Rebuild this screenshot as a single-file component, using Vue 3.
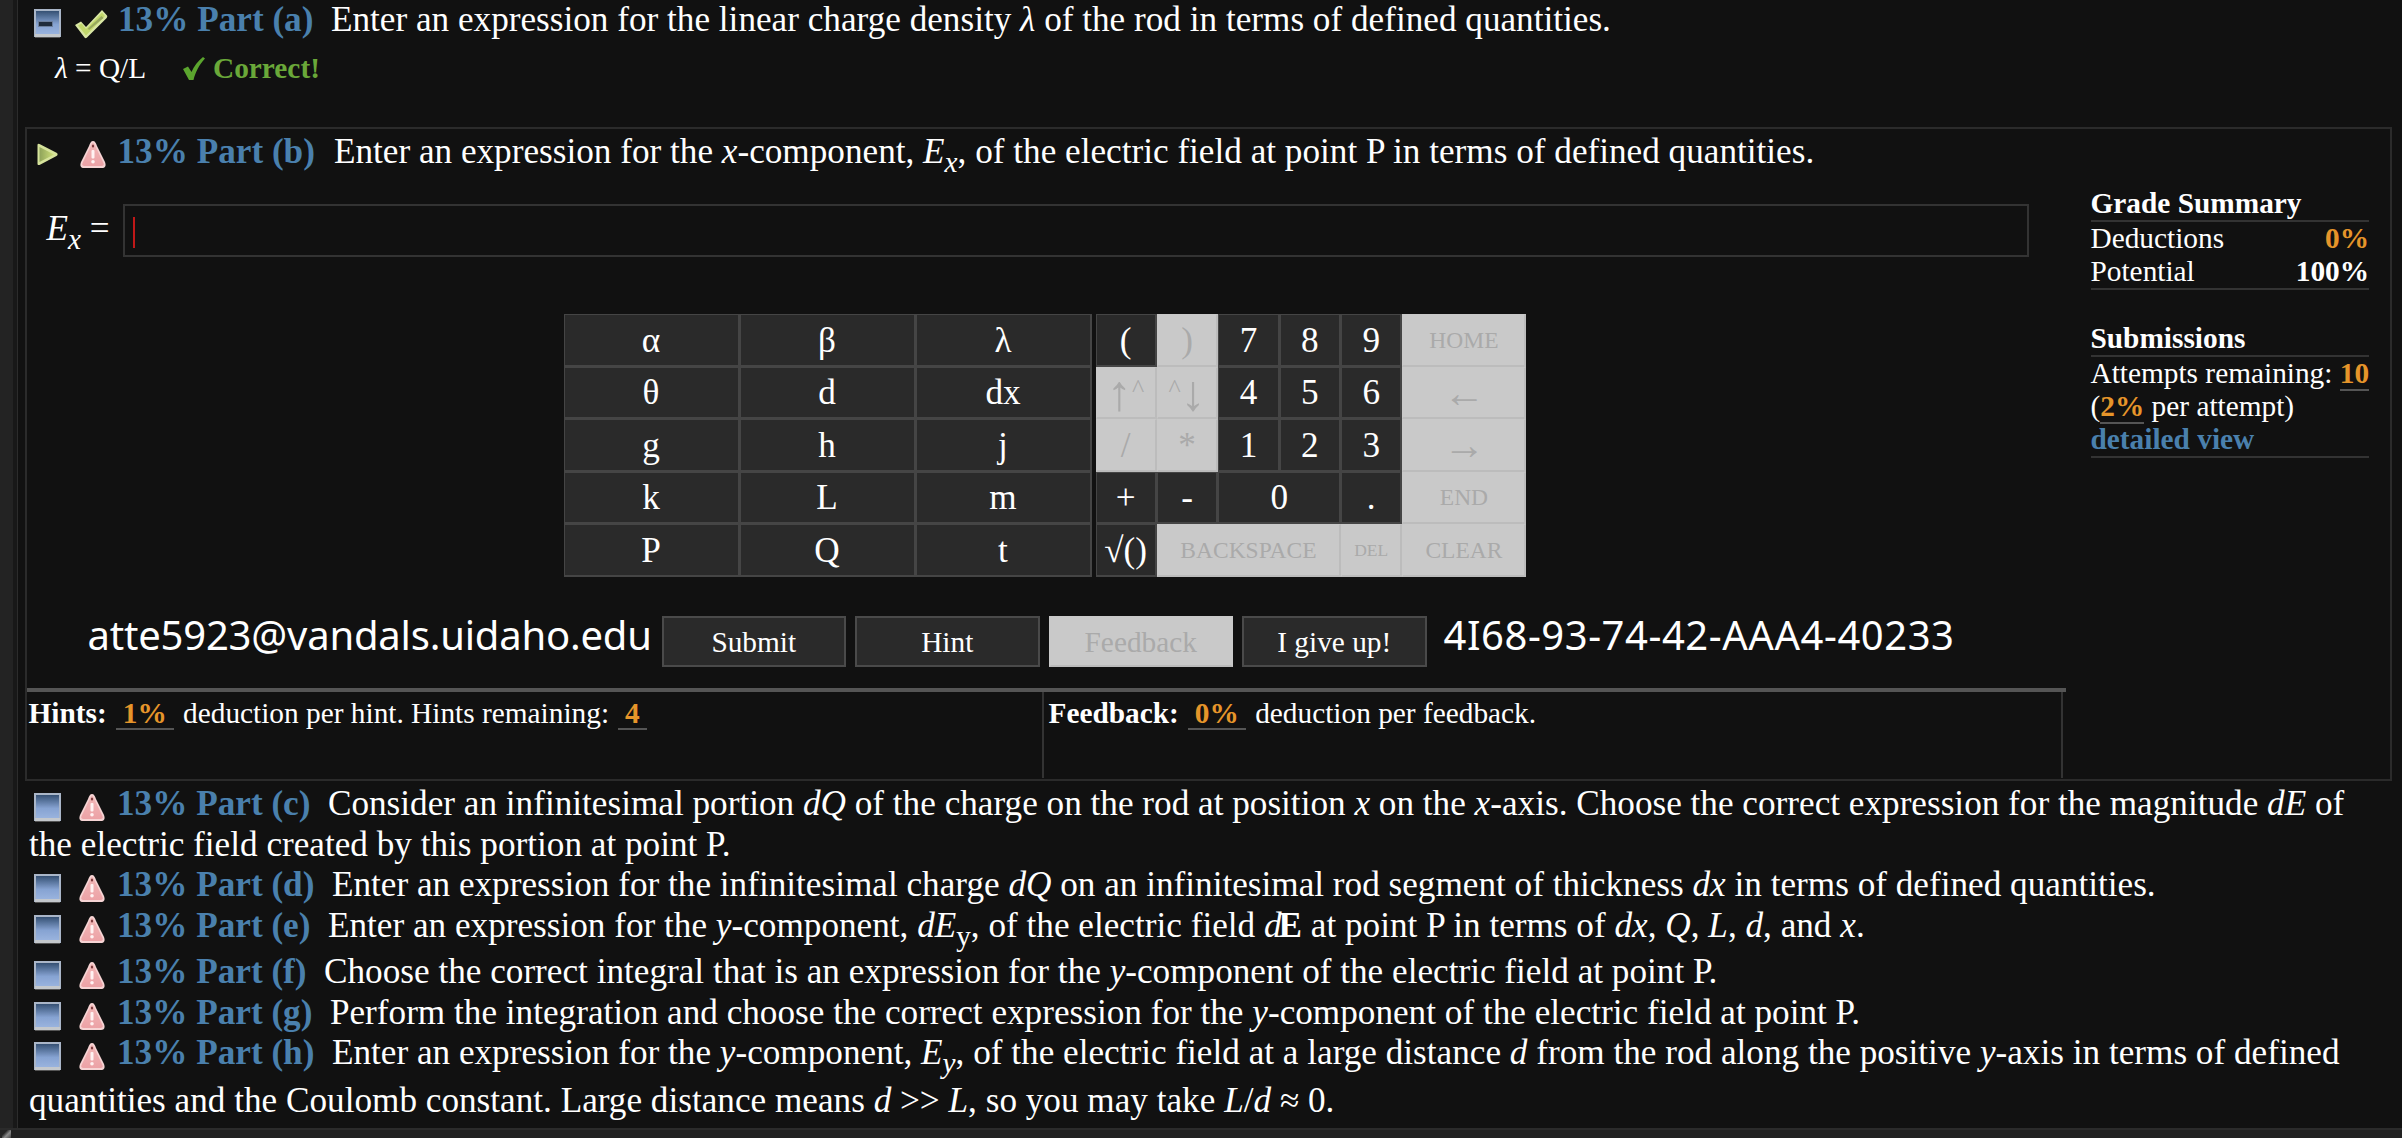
<script setup>
const alpha = ['α','β','λ','θ','d','dx','g','h','j','k','L','m','P','Q','t']
const pad = [
  { t: '(' }, { t: ')', off: 1 }, { t: '7' }, { t: '8' }, { t: '9' }, { t: 'HOME', off: 1, sm: 1 },
  { t: '^', up: 1, off: 1 }, { t: '^', down: 1, off: 1 }, { t: '4' }, { t: '5' }, { t: '6' }, { t: '←', off: 1, ar: 1 },
  { t: '/', off: 1 }, { t: '*', off: 1 }, { t: '1' }, { t: '2' }, { t: '3' }, { t: '→', off: 1, ar: 1 },
  { t: '+' }, { t: '-' }, { t: '0', span: 2 }, { t: '.' }, { t: 'END', off: 1, sm: 1 },
  { t: '√()' }, { t: 'BACKSPACE', off: 1, sm: 1, span: 3 }, { t: 'DEL', off: 1, xs: 1 }, { t: 'CLEAR', off: 1, sm: 1 }
]
</script>

<template>
  <div class="frame">
    <svg class="defs" width="0" height="0">
      <defs>
        <linearGradient id="boxfill" x1="0" y1="0" x2="0" y2="1">
          <stop offset="0" stop-color="#2f4a6c" />
          <stop offset="0.55" stop-color="#86a3d2" />
          <stop offset="1" stop-color="#9db6e0" />
        </linearGradient>
        <linearGradient id="conefill" x1="0" y1="0" x2="0" y2="1">
          <stop offset="0" stop-color="#f2b8b8" />
          <stop offset="1" stop-color="#eca2a6" />
        </linearGradient>
        <linearGradient id="greenfill" x1="0" y1="0" x2="1" y2="0">
          <stop offset="0" stop-color="#8fa35a" />
          <stop offset="1" stop-color="#cfe07a" />
        </linearGradient>
        <filter id="soft" x="-10%" y="-10%" width="120%" height="120%">
          <feGaussianBlur stdDeviation="0.45" />
        </filter>
        <symbol id="box" viewBox="0 0 27 29">
          <g filter="url(#soft)">
            <rect x="1" y="1" width="25" height="26" fill="url(#boxfill)" stroke="#aab6c8" stroke-width="2" />
            <rect x="1" y="25" width="25" height="3" fill="#c4c8cc" />
          </g>
          <rect x="1" y="28" width="25" height="1" fill="#555" />
        </symbol>
        <symbol id="cone" viewBox="0 0 28 29">
          <g filter="url(#soft)">
            <path d="M14 1C16 1 17 3 18 6L26 22C27.500 26 26 28 23 28H5C2 28 .5 26 2 22L10 6C11 3 12 1 14 1Z" fill="#f6d4d4" />
            <path d="M14 3C15 3 15.800 4.500 16.500 6.500L24.500 23C25.300 25 24.500 26 22.500 26H5.500C3.500 26 2.700 25 3.500 23L11.500 6.500C12.200 4.500 13 3 14 3Z" fill="url(#conefill)" />
            <ellipse cx="14" cy="6" rx="1.100" ry="1.500" fill="#7a3a3c" />
            <rect x="12.500" y="10" width="3" height="8.500" rx="1" fill="#fff2f2" />
            <circle cx="14" cy="21.800" r="1.800" fill="#fff2f2" />
          </g>
        </symbol>
        <symbol id="check" viewBox="0 0 34 31">
          <g filter="url(#soft)">
            <path d="M1 17l6-3.500 5 5.500L28 2l5 5.500c.5 1 .3 1.500-.3 2.500L13 29.500c-.8 1-1.700 1-2.500 0z" fill="#d9e6a4" />
            <path d="M4 17.500l3.500-2 4.500 5.500L28 4.500l3 3.500L12 27.500z" fill="#c2d86c" />
            <path d="M14 20.500L27.500 8l2 2L15 22z" fill="#97a85e" />
          </g>
        </symbol>
        <symbol id="play" viewBox="0 0 23 23">
          <g filter="url(#soft)">
            <path d="M2.500 1.500c.5-1 1.500-1 2.500-.3l16.500 8.500c1.500.9 1.500 2.300 0 3.200L5 21.700c-1 .7-2 .5-2.500-.5z" fill="#d6e39b" />
            <path d="M4.500 4l14.500 7.500L4.500 19z" fill="url(#greenfill)" />
          </g>
        </symbol>
      </defs>
    </svg>

    <div class="strip"></div>
    <main class="main">
      <div class="part">
        <svg class="ic box"><use href="#box" /></svg>
        <span class="minus"></span>
        <svg class="ic chk"><use href="#check" /></svg>
        <b class="lbl">13% Part (a)</b><span class="desc">Enter an expression for the linear charge density <i>λ</i> of the rod in terms of defined quantities.</span>
      </div>
      <div class="answer">
        <span class="ans-val"><i>λ</i> = Q/L</span>
        <span class="tick"><svg class="tick-ic" viewBox="0 0 22 23"><path d="M0 12L5 9.500L8.500 15C11 9 15 4 20 0L22 1.500C16 8 12.500 15 10.500 23H6z" /></svg></span>
        <b class="correct">Correct!</b>
      </div>

      <section class="panel">
        <div class="part part-b">
          <svg class="ic pl"><use href="#play" /></svg>
          <svg class="ic con"><use href="#cone" /></svg>
          <b class="lbl">13% Part (b)</b><span class="desc">Enter an expression for the <i>x</i>-component, <i>E<sub>x</sub></i>, of the electric field at point P in terms of defined quantities.</span>
        </div>
        <div class="panel-body">
          <div class="work">
            <div class="entry">
              <span class="eq"><i>E<sub>x</sub></i> =</span>
              <div class="input"><span class="caret"></span></div>
            </div>
            <div class="keys">
              <div class="grid-a">
                <div v-for="k in alpha" :key="k" class="key">{{ k }}</div>
              </div>
              <div class="grid-b">
                <div
                  v-for="(k, i) in pad"
                  :key="i"
                  class="key"
                  :class="{ off: k.off, sm: k.sm, xs: k.xs, ar: k.ar, span2: k.span === 2, span3: k.span === 3 }"
                ><span v-if="k.up" class="arr">↑</span><span :class="{ hat: k.up || k.down }">{{ k.t }}</span><span v-if="k.down" class="arr">↓</span></div>
              </div>
            </div>
            <div class="actions">
              <span class="sans email">atte5923@vandals.uidaho.edu</span>
              <div class="btn">Submit</div>
              <div class="btn">Hint</div>
              <div class="btn off">Feedback</div>
              <div class="btn">I give up!</div>
              <span class="sans code">4I68-93-74-42-AAA4-40233</span>
            </div>
            <div class="tips">
              <div class="tip tip-l"><b>Hints:</b><b class="val">1%</b> deduction per hint. Hints remaining:<b class="val">4</b></div>
              <div class="tip tip-r"><b>Feedback:</b><b class="val">0%</b> deduction per feedback.</div>
            </div>
          </div>
          <aside class="side">
            <div class="s-h">Grade Summary</div>
            <div class="s-row"><span>Deductions</span><b class="orange">0%</b></div>
            <div class="s-row s-end"><span>Potential</span><b>100%</b></div>
            <div class="s-h s-h2">Submissions</div>
            <div>Attempts remaining: <b class="orange under">10</b></div>
            <div>(<b class="orange under">2%</b> per attempt)</div>
            <div class="s-end"><b class="link">detailed view</b></div>
          </aside>
        </div>
      </section>

      <div class="part part-c">
        <svg class="ic box"><use href="#box" /></svg>
        <svg class="ic con"><use href="#cone" /></svg>
        <b class="lbl">13% Part (c)</b><span class="desc">Consider an infinitesimal portion <i>dQ</i> of the charge on the rod at position <i>x</i> on the <i>x</i>-axis. Choose the correct expression for the magnitude <i>dE</i> of the electric field created by this portion at point P.</span>
      </div>
      <div class="part">
        <svg class="ic box"><use href="#box" /></svg>
        <svg class="ic con"><use href="#cone" /></svg>
        <b class="lbl">13% Part (d)</b><span class="desc">Enter an expression for the infinitesimal charge <i>dQ</i> on an infinitesimal rod segment of thickness <i>dx</i> in terms of defined quantities.</span>
      </div>
      <div class="part part-e">
        <svg class="ic box"><use href="#box" /></svg>
        <svg class="ic con"><use href="#cone" /></svg>
        <b class="lbl">13% Part (e)</b><span class="desc">Enter an expression for the <i>y</i>-component, <i>dE</i><sub>y</sub>, of the electric field <i>d</i><b class="tight">E</b> at point P in terms of <i>dx</i>, <i>Q</i>, <i>L</i>, <i>d</i>, and <i>x</i>.</span>
      </div>
      <div class="part">
        <svg class="ic box"><use href="#box" /></svg>
        <svg class="ic con"><use href="#cone" /></svg>
        <b class="lbl">13% Part (f)</b><span class="desc">Choose the correct integral that is an expression for the <i>y</i>-component of the electric field at point P.</span>
      </div>
      <div class="part">
        <svg class="ic box"><use href="#box" /></svg>
        <svg class="ic con"><use href="#cone" /></svg>
        <b class="lbl">13% Part (g)</b><span class="desc">Perform the integration and choose the correct expression for the <i>y</i>-component of the electric field at point P.</span>
      </div>
      <div class="part">
        <svg class="ic box"><use href="#box" /></svg>
        <svg class="ic con"><use href="#cone" /></svg>
        <b class="lbl">13% Part (h)</b><span class="desc">Enter an expression for the <i>y</i>-component, <i>E<sub class="grow">y</sub></i>, of the electric field at a large distance <i>d</i> from the rod along the positive <i>y</i>-axis in terms of defined quantities and the Coulomb constant. Large distance means <i>d</i> &gt;&gt; <i>L</i>, so you may take <i>L</i>/<i>d</i> ≈ 0.</span>
      </div>
    </main>
    <div class="foot"><span class="grip"></span></div>
  </div>
</template>

<style>
html, body { margin: 0; background: #111; }
</style>

<style scoped>
.frame {
  width: 2402px;
  height: 1138px;
  overflow: hidden;
  position: relative;
  background: #111;
  display: grid;
  grid-template-columns: 18px 1fr;
  grid-template-rows: 1128px 10px;
  font-family: "Liberation Serif", "Times New Roman", serif;
  color: #fff;
}
.defs { position: absolute; }
.strip {
  background: linear-gradient(to right, #232323 0 13px, #181818 13px 17px, #2c2c2c 17px);
}
.main { min-width: 0; overflow: hidden; font-size: 35.200px; line-height: 40.500px; padding-right: 10px; }
.foot { grid-column: 1 / 3; background: #222; border-top: 2px solid #2b2b2b; box-sizing: border-box; position: relative; }
.grip { position: absolute; left: 2px; bottom: 0; width: 9px; height: 8px; background: linear-gradient(135deg, #222 30%, #8a8a8a 60%, #444); }
.part { padding-left: 11px; position: relative; }
.part-b { padding-left: 10px; padding-top: 3px; height: 72px; white-space: nowrap; }
.part-c { margin-top: 3px; }
.part-e { padding-bottom: 6px; }
.ic { display: inline-block; vertical-align: -7px; }
.box { width: 27px; height: 29px; margin-left: 5px; }
.con { width: 28px; height: 29px; margin-left: 17px; }
.chk { width: 34px; height: 31px; margin-left: 13px; margin-right: -1px; vertical-align: -8px; }
.pl { width: 23px; height: 23px; margin-left: -2px; vertical-align: -3px; }
.part-b .con { vertical-align: -6px; margin-left: 21px; }
.minus {
  position: absolute;
  left: 20px;
  top: 21px;
  width: 15px;
  height: 6px;
  background: #202c3c;
  border: 1px solid #6d7f9c;
  box-sizing: border-box;
}
.lbl { color: #4a80ad; margin-left: 11px; margin-right: 17.500px; }
.part-b .lbl { margin-right: 19px; }
.desc b.tight { margin-left: -3px; }
sub { font-size: 83%; line-height: 0; vertical-align: -9px; }
sub.grow { line-height: 36px; }
.answer { height: 55px; font-size: 29.330px; line-height: 55px; padding-left: 37px; display: flex; align-items: center; }
.ans-val { width: 128px; }
.tick { width: 30px; display: flex; align-items: center; }
.tick-ic { width: 22px; height: 23px; fill: #5ba52e; }
.correct { color: #6aa839; }
.panel {
  margin: 31.500px 0 0 6.500px;
  border: 2px solid #2b2b2b;
  height: 654px;
  box-sizing: border-box;
  overflow: hidden;
}
.panel-body { display: grid; grid-template-columns: 2039px 1fr; }
.entry { display: flex; align-items: flex-start; padding-left: 20px; height: 110px; }
.eq { width: 76px; font-size: 35.200px; line-height: 50px; white-space: nowrap; }
.input {
  width: 1906px;
  height: 53px;
  box-sizing: border-box;
  border: 2px solid #333;
  padding: 11px 8px;
}
.caret { display: block; width: 2px; height: 31px; background: #c01818; }
.keys { display: flex; gap: 4px; padding-left: 537px; }
.grid-a { display: grid; grid-template-columns: repeat(3, 176px); grid-auto-rows: 52.600px; }
.grid-b { display: grid; grid-template-columns: repeat(5, 61.400px) 124px; grid-auto-rows: 52.600px; }
.key {
  display: flex;
  align-items: center;
  justify-content: center;
  box-sizing: border-box;
  background: #2a2a2a;
  border: solid #454545;
  border-width: 1px 2px 2px 1px;
  font-size: 35.200px;
  line-height: 1;
  padding-top: 1px;
  white-space: nowrap;
}
.key.off { background: #c9c9c9; color: #aaa; border-color: #c9c9c9 #bcbcbc #bcbcbc #c9c9c9; }
.key.sm { font-size: 23.500px; }
.key.xs { font-size: 17.500px; }
.key.ar { font-size: 42px; }
.arr { font-size: 50px; line-height: 44px; }
.hat { font-size: 26px; align-self: flex-start; padding-top: 7px; }
.span2 { grid-column: span 2; }
.span3 { grid-column: span 3; }
.actions { display: flex; align-items: flex-start; padding-left: 61px; margin-top: 39px; height: 72px; }
.sans { font-family: "Noto Sans", "Open Sans", sans-serif; font-size: 40px; line-height: 37px; white-space: nowrap; }
.email { width: 574px; letter-spacing: -0.200px; }
.code { margin-left: 8px; letter-spacing: 0.550px; }
.btn {
  width: 184.500px;
  height: 51px;
  margin-right: 9px;
  box-sizing: border-box;
  background: #2a2a2a;
  border: 2px solid #4a4a4a;
  display: flex;
  align-items: center;
  justify-content: center;
  font-size: 29.330px;
  padding-top: 1px;
}
.btn.off { background: #c9c9c9; color: #aaa; border-color: #c9c9c9; border-bottom-color: #bbb; }
.tips {
  border-top: 4px solid #555;
  display: grid;
  grid-template-columns: 1017px 1fr;
  height: 86px;
  font-size: 29.330px;
  line-height: 40px;
}
.tip { padding-left: 2px; padding-top: 1px; white-space: nowrap; }
.tip-l { border-right: 2px solid #333; }
.tip-r { padding-left: 5px; border-right: 2px solid #333; width: 1019px; box-sizing: border-box; }
.val { display: inline-block; color: #e6952a; border-bottom: 2px solid #555; line-height: 30px; padding: 0 7px; margin: 0 2px 0 9px; }
.side { padding: 0 0 0 25px; margin-right: 21px; font-size: 29.330px; line-height: 33px; margin-top: -17px; white-space: nowrap; }
.s-h { font-weight: bold; border-bottom: 2px solid #333; height: 33px; }
.s-h2 { margin-top: 32px; }
.s-row { display: flex; justify-content: space-between; }
.s-end { border-bottom: 2px solid #333; }
.orange { color: #e6952a; }
.under { border-bottom: 2px solid #555; }
.link { color: #4a80ad; }
</style>
